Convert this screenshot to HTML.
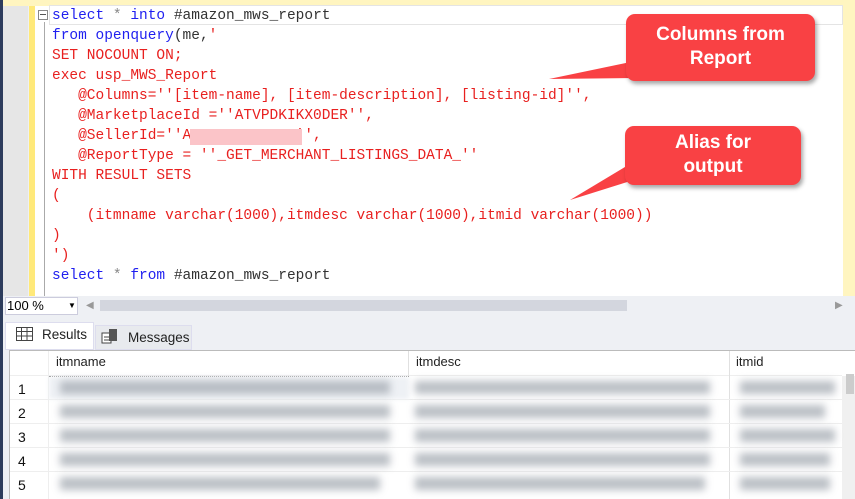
<!DOCTYPE html>
<html><head><style>
*{margin:0;padding:0;box-sizing:border-box}
body{width:855px;height:499px;overflow:hidden;background:#eef0f4;font-family:"Liberation Sans",sans-serif;position:relative}
.a{position:absolute}
.code{font-family:"Liberation Mono",monospace;font-size:14.5px;line-height:20px;white-space:pre;color:#e8201f}
.b{color:#1f1ff0}.k{color:#333}.g{color:#888}
.blur{position:absolute;height:13px;background:#a4aab2;filter:blur(4px);opacity:.75}
.call{position:absolute;background:#f94144;border-radius:9px;color:#fff;font-weight:bold;font-size:19px;text-align:center;line-height:24px;box-shadow:2px 3px 4px rgba(0,0,0,.35)}
</style></head><body>
<div class="a" style="left:0;top:0;width:855px;height:6px;background:#fff5c0"></div>
<div class="a" style="left:0;top:0;width:3px;height:499px;background:#2d3c5c"></div>
<div class="a" style="left:3px;top:6px;width:25px;height:290px;background:#e6e6e6"></div>
<div class="a" style="left:29px;top:6px;width:6px;height:290px;background:#ffe97a"></div>
<div class="a" style="left:35px;top:6px;width:808px;height:290px;background:#fff"></div>
<div class="a" style="left:44px;top:22px;width:1px;height:274px;background:#aaa"></div>
<div class="a" style="left:49px;top:5px;width:794px;height:20px;border:1px solid #e4e4e4"></div>
<div class="a" style="left:38px;top:10px;width:10px;height:10px;border:1px solid #888;background:#fff"></div>
<div class="a" style="left:40px;top:14px;width:6px;height:1px;background:#555"></div>
<div class="a" style="left:843px;top:6px;width:12px;height:290px;background:#fff5c0"></div>
<div class="a code" style="left:52px;top:6px"><span class="b">select</span> <span class="g">*</span> <span class="b">into</span> <span class="k">#amazon_mws_report</span>
<span class="b">from</span> <span class="b">openquery</span><span class="k">(me,</span>'
SET NOCOUNT ON;
exec usp_MWS_Report
   @Columns=''[item-name], [item-description], [listing-id]'',
   @MarketplaceId =''ATVPDKIKX0DER'',
   @SellerId=''A            '',
   @ReportType = ''_GET_MERCHANT_LISTINGS_DATA_''
WITH RESULT SETS
(
    (itmname varchar(1000),itmdesc varchar(1000),itmid varchar(1000))
)
')
<span class="b">select</span> <span class="g">*</span> <span class="b">from</span> <span class="k">#amazon_mws_report</span></div>
<div class="a" style="left:190px;top:129px;width:112px;height:16px;background:#fbc4c8"></div>
<svg class="a" style="left:540px;top:40px" width="120" height="170"><polygon points="9,39 100,20 100,38" fill="#f94144"/><polygon points="30,160 100,118 100,138" fill="#f94144"/></svg>
<div class="call" style="left:626px;top:14px;width:189px;height:67px;padding-top:9px">Columns from<br>Report</div>
<div class="call" style="left:625px;top:126px;width:176px;height:59px;padding-top:5px">Alias for<br>output</div>
<div class="a" style="left:3px;top:296px;width:852px;height:20px;background:#eef0f4"></div>
<div class="a" style="left:5px;top:297px;width:73px;height:18px;background:#fff;border:1px solid #ccd;font-size:13px;padding-left:1px;line-height:16px">100 %<span style="position:absolute;left:62px;top:0;font-size:8px">▼</span></div>
<div class="a" style="left:86px;top:300px;font-size:10px;color:#999">◀</div>
<div class="a" style="left:100px;top:300px;width:527px;height:11px;background:#d3d6de"></div>
<div class="a" style="left:835px;top:300px;font-size:10px;color:#999">▶</div>
<div class="a" style="left:5px;top:322px;width:89px;height:28px;background:#fff;border:1px solid #dde"></div>
<svg class="a" style="left:16px;top:327px" width="18" height="15"><rect x="0.5" y="0.5" width="16" height="13" fill="#fff" stroke="#444"/><path d="M0 4.5H17M0 9H17M5.5 0V14M11 0V14" stroke="#444"/></svg>
<div class="a" style="left:42px;top:327px;font-size:13.5px;color:#222">Results</div>
<div class="a" style="left:95px;top:325px;width:97px;height:25px;background:#e8eaee;border:1px solid #dde"></div>
<svg class="a" style="left:101px;top:328px" width="18" height="17"><rect x="1" y="5" width="9" height="10" fill="#fff" stroke="#444"/><rect x="8" y="1" width="8" height="12" fill="#555"/><path d="M3 9h5M3 12h5" stroke="#444"/></svg>
<div class="a" style="left:128px;top:330px;font-size:13.5px;color:#222">Messages</div>
<div class="a" style="left:9px;top:350px;width:846px;height:149px;background:#fff;border-top:1px solid #bbb;border-left:1px solid #bbb"></div>
<div class="a" style="left:10px;top:375px;width:832px;height:1px;background:#eee"></div>
<div class="a" style="left:48px;top:351px;width:1px;height:148px;background:#eee"></div>
<div class="a" style="left:408px;top:351px;width:1px;height:25px;background:#e0e0e0"></div>
<div class="a" style="left:729px;top:351px;width:1px;height:148px;background:#e0e0e0"></div>
<div class="a" style="left:56px;top:354px;font-size:13px;color:#222">itmname</div>
<div class="a" style="left:416px;top:354px;font-size:13px;color:#222">itmdesc</div>
<div class="a" style="left:736px;top:354px;font-size:13px;color:#222">itmid</div>
<div class="a" style="left:49px;top:376px;width:360px;height:1px;border-top:1px dotted #888"></div>
<div class="a" style="left:842px;top:376px;width:13px;height:123px;background:#f0f0f0"></div>
<div class="a" style="left:846px;top:374px;width:8px;height:20px;background:#ccc"></div>
<div class="a" style="left:18px;top:377px;font-size:14px;line-height:24px;color:#111">1<br>2<br>3<br>4<br>5</div>
<div class="a" style="left:10px;top:399px;width:832px;height:1px;background:#eee"></div>
<div class="a" style="left:10px;top:423px;width:832px;height:1px;background:#eee"></div>
<div class="a" style="left:10px;top:447px;width:832px;height:1px;background:#eee"></div>
<div class="a" style="left:10px;top:471px;width:832px;height:1px;background:#eee"></div>
<div class="a" style="left:49px;top:377px;width:360px;height:22px;background:#eef1f5;filter:blur(2px)"></div>
<div class="blur" style="left:60px;top:381px;width:330px"></div>
<div class="blur" style="left:60px;top:405px;width:330px"></div>
<div class="blur" style="left:60px;top:429px;width:330px"></div>
<div class="blur" style="left:60px;top:453px;width:330px"></div>
<div class="blur" style="left:60px;top:477px;width:320px"></div>
<div class="blur" style="left:415px;top:381px;width:295px"></div>
<div class="blur" style="left:415px;top:405px;width:295px"></div>
<div class="blur" style="left:415px;top:429px;width:295px"></div>
<div class="blur" style="left:415px;top:453px;width:295px"></div>
<div class="blur" style="left:415px;top:477px;width:290px"></div>
<div class="blur" style="left:740px;top:381px;width:95px"></div>
<div class="blur" style="left:740px;top:405px;width:85px"></div>
<div class="blur" style="left:740px;top:429px;width:95px"></div>
<div class="blur" style="left:740px;top:453px;width:90px"></div>
<div class="blur" style="left:740px;top:477px;width:90px"></div>
</body></html>
